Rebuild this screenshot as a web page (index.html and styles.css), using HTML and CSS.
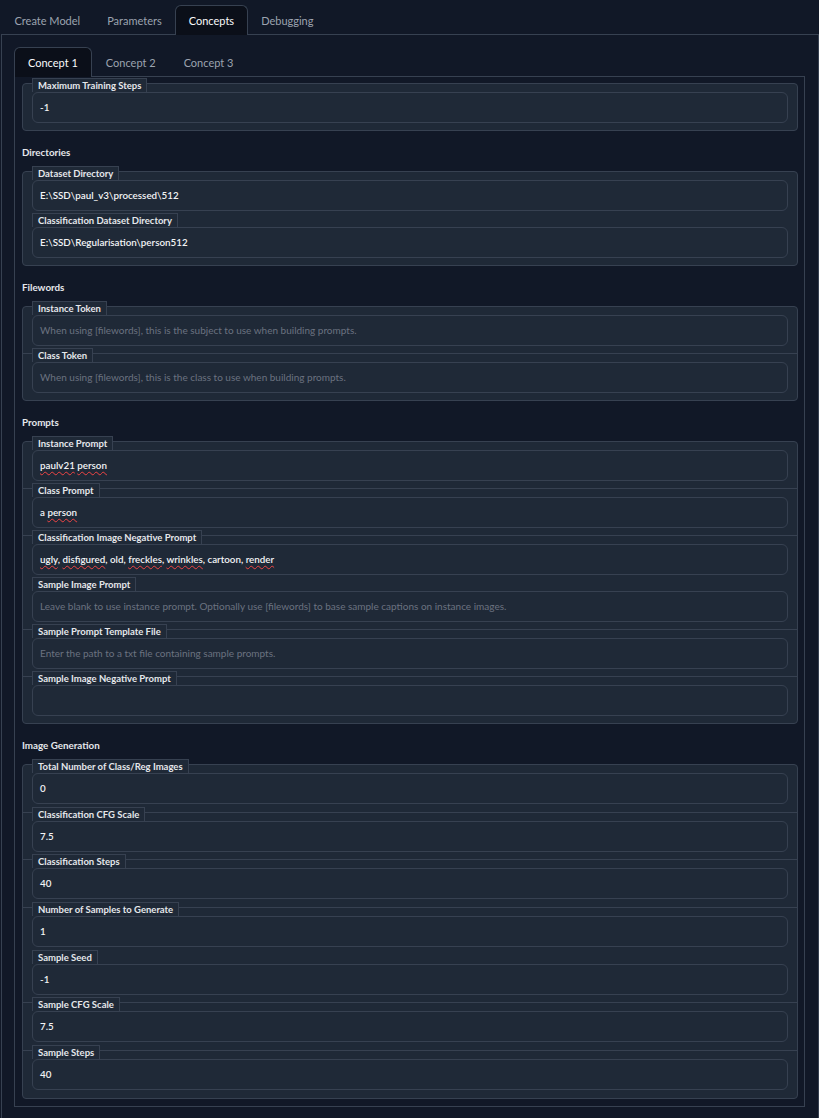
FILE: index.html
```html
<!DOCTYPE html>
<html lang="en">
<head>
<meta charset="utf-8">
<title>Concepts</title>
<link rel="stylesheet" href="styles.css">
</head>
<body>
<div class="page">
  <div class="tabnav top">
    <div class="tab">Create Model</div>
    <div class="tab">Parameters</div>
    <div class="tab active">Concepts</div>
    <div class="tab">Debugging</div>
  </div>
  <div class="panel outer">
    <div class="tabnav sub">
      <div class="tab">Concept 1</div>
      <div class="tab">Concept 2</div>
      <div class="tab">Concept 3</div>
    </div>
    <div class="panel inner">
      <div class="group">
        <div class="field">
          <div class="label">Maximum Training Steps</div>
          <div class="input">-1</div>
        </div>
      </div>

      <div class="heading">Directories</div>
      <div class="group">
        <div class="field">
          <div class="label">Dataset Directory</div>
          <div class="input">E:\SSD\paul_v3\processed\512</div>
        </div>
        <div class="field nosep">
          <div class="label">Classification Dataset Directory</div>
          <div class="input">E:\SSD\Regularisation\person512</div>
        </div>
      </div>

      <div class="heading">Filewords</div>
      <div class="group">
        <div class="field">
          <div class="label">Instance Token</div>
          <div class="input ph">When using [filewords], this is the subject to use when building prompts.</div>
        </div>
        <div class="field">
          <div class="label">Class Token</div>
          <div class="input ph">When using [filewords], this is the class to use when building prompts.</div>
        </div>
      </div>

      <div class="heading">Prompts</div>
      <div class="group">
        <div class="field">
          <div class="label">Instance Prompt</div>
          <div class="input"><span class="sp">paulv21</span> <span class="sp">person</span></div>
        </div>
        <div class="field">
          <div class="label">Class Prompt</div>
          <div class="input">a <span class="sp">person</span></div>
        </div>
        <div class="field">
          <div class="label">Classification Image Negative Prompt</div>
          <div class="input"><span class="sp">ugly</span>, <span class="sp">disfigured</span>, old, <span class="sp">freckles</span>, <span class="sp">wrinkles</span>, cartoon, <span class="sp">render</span></div>
        </div>
        <div class="field nosep">
          <div class="label">Sample Image Prompt</div>
          <div class="input ph">Leave blank to use instance prompt. Optionally use [filewords] to base sample captions on instance images.</div>
        </div>
        <div class="field">
          <div class="label">Sample Prompt Template File</div>
          <div class="input ph">Enter the path to a txt file containing sample prompts.</div>
        </div>
        <div class="field">
          <div class="label">Sample Image Negative Prompt</div>
          <div class="input"></div>
        </div>
      </div>

      <div class="heading">Image Generation</div>
      <div class="group num">
        <div class="field">
          <div class="label">Total Number of Class/Reg Images</div>
          <div class="input">0</div>
        </div>
        <div class="field">
          <div class="label">Classification CFG Scale</div>
          <div class="input">7.5</div>
        </div>
        <div class="field">
          <div class="label">Classification Steps</div>
          <div class="input">40</div>
        </div>
        <div class="field">
          <div class="label">Number of Samples to Generate</div>
          <div class="input">1</div>
        </div>
        <div class="field nosep">
          <div class="label">Sample Seed</div>
          <div class="input">-1</div>
        </div>
        <div class="field">
          <div class="label">Sample CFG Scale</div>
          <div class="input">7.5</div>
        </div>
        <div class="field">
          <div class="label">Sample Steps</div>
          <div class="input">40</div>
        </div>
      </div>
    </div>
  </div>
</div>
</body>
</html>
```

FILE: styles.css
```css
html, body {
  margin: 0;
  background: #111827;
}

body {
  font-family: Lato, "Liberation Sans", sans-serif;
  color: #e5e7eb;
}

.page {
  padding: 5px 0 0 1px;
}

.tabnav {
  display: flex;
  height: 30px;
  margin-bottom: -1px;
}

.tab {
  height: 30px;
  box-sizing: border-box;
  padding: 0 12.5px;
  line-height: 29px;
  font-size: 11px;
  color: #9ca3af;
  border: 1px solid transparent;
  border-bottom: none;
  border-radius: 6px 6px 0 0;
  white-space: nowrap;
}

.sub .tab {
  padding: 0 13px;
}

.tab.active,
.sub .tab:first-child {
  background: #0b0f19;
  border-color: #374151;
  color: #f9fafb;
  position: relative;
  z-index: 1;
}

.panel {
  border: 1px solid #374151;
}

.panel.outer {
  padding: 12px 13px 14px 12px;
}

.panel.inner {
  padding: 6px 6px 7px 7px;
}

.heading {
  margin: 12px 0 10px;
  line-height: 18px;
  font-size: 9.8px;
  font-weight: 700;
  color: #e5e7eb;
}

.group {
  background: #1f2937;
  border: 1px solid #374151;
  border-radius: 4px;
}

.field {
  padding: 0 9px 7px;
  border-top: 1px solid #374151;
}

.field:first-child {
  border-top: none;
}

.field.nosep {
  border-top-color: transparent;
}

.group.num .field {
  padding-bottom: 7.67px;
}

.label {
  width: fit-content;
  height: 14px;
  box-sizing: border-box;
  margin-top: -6px;
  padding: 0 5px;
  border: 1px solid #374151;
  border-bottom: none;
  background: #1f2937;
  font-size: 9.5px;
  font-weight: 700;
  line-height: 13px;
  color: #e5e7eb;
  white-space: nowrap;
}

.input {
  height: 31px;
  box-sizing: border-box;
  border: 1px solid #374151;
  border-radius: 6px;
  background: #1f2937;
  padding: 0 7px;
  line-height: 29px;
  font-size: 9.8px;
  font-weight: 600;
  color: #f3f4f6;
  white-space: nowrap;
  overflow: hidden;
}

.input.ph {
  color: #6b7280;
  font-weight: 400;
  font-size: 10px;
}

.sp {
  text-decoration: underline wavy #ef4444;
  text-decoration-thickness: 1px;
  text-underline-offset: 2px;
  text-decoration-skip-ink: none;
}
```
